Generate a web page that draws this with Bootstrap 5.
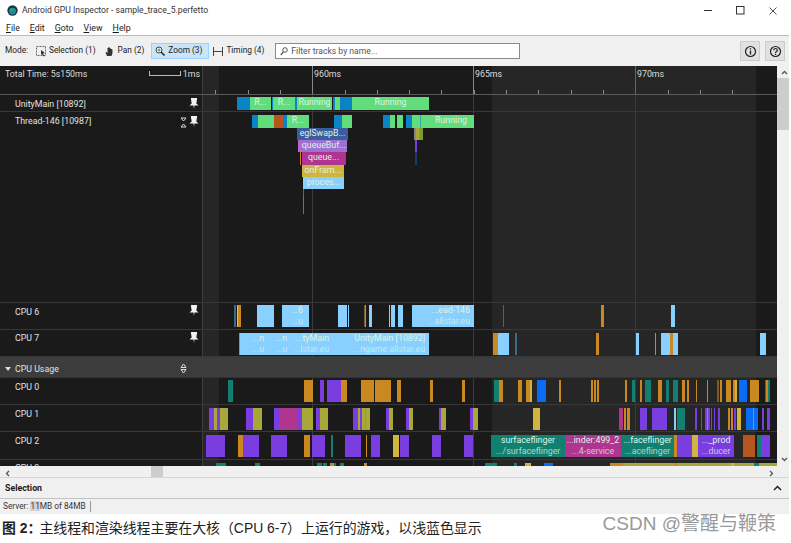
<!DOCTYPE html>
<html lang="zh"><head><meta charset="utf-8"><title>Android GPU Inspector</title>
<link href="https://cdn.jsdelivr.net/npm/bootstrap@5.3.0/dist/css/bootstrap.min.css" rel="stylesheet">
<style>
html,body{margin:0;height:543px;overflow:hidden;background:#fff}
body{font:8.8px/1.2 Roboto,sans-serif;color:#1a1a1a}
.win{width:789px;height:514px;display:flex;flex-direction:column;background:#f0f0f0}
.ttl{height:21px;background:#fff;padding:0 0 0 7px;flex:none}
.ttl .nm{margin-left:4px;color:#333;font-size:8.6px}
.wc{margin-left:auto;padding-right:12px;gap:24px}
.mnu{height:15px;background:#fff;padding:0 0 0 6px;gap:10px;border-bottom:1px solid #bbb;flex:none}
.mnu u{text-decoration-thickness:1px;text-underline-offset:1px}
.tbar{height:30px;padding:0 4px 0 5px;flex:none;font-size:8.3px}
.md{height:16px;display:flex;align-items:center;white-space:nowrap;border:1px solid transparent}
.md.on{background:#cce4f7;border-color:#99d1ff;padding:0 6px 0 3px}
.mode{margin-right:7px;width:23px}
.pan{margin-left:7px}.zm{margin-left:6px}.tim{margin-left:3px}
.gap2px{margin-left:2px}.gap3px{margin-left:3px}
.flt{width:245px;height:16px;margin-left:10px;border:1px solid #8a8a8a;background:#fff;padding-left:4px;color:#555;gap:3px;font-size:8.6px}
.ib{width:20px;height:20px;background:#e1e1e1;border:1px solid #ccc;margin-left:5px}
.tmain{flex:1;min-height:0;display:flex}
.tl{position:relative;flex:1;min-width:0;background:#1a1a1a;color:#e2e2e2;overflow:hidden}
.bnd{position:absolute;top:0;bottom:0;background:#262626}
.vl{position:absolute;top:0;bottom:0;width:1px;background:#3b3b3b}
.trk{position:relative;display:flex;border-bottom:1px solid #383838;flex:none}
.lab{width:203px;flex:none;background:#1a1a1a;border-right:1px solid #3f3f3f;padding-left:15px;display:flex;align-items:flex-start;white-space:nowrap;position:relative;z-index:2}
.lab .pin{position:absolute;left:189px}
.cv{position:relative;flex:1;overflow:hidden}
.hd{height:29px;border-bottom-color:#5a5a5a}
.hd .lab{padding:3px 2px 0 5px;justify-content:space-between;color:#ddd}
.sb{position:absolute;top:5px;left:149px;width:32px;height:5px;border:1px solid #bbb;border-top:0}
.tm{position:absolute;top:3px;color:#ddd}
.tk{position:absolute;top:24px;width:1px;height:5px;background:#8a8a8a}
.sg{position:absolute;overflow:hidden;white-space:nowrap;text-align:center;line-height:11.5px;color:#dff3e5}
.sg.r{text-align:right;padding-right:4px}
.sg.two{line-height:11px}
.sg span{display:block}
.sg span+span{opacity:.75}
.use{height:21px;background:#3c3c3c;border-bottom-color:#333;z-index:3}
.use .lab{background:#3c3c3c;border-right:0;padding:7px 0 0 15px}
.vs{width:12px;flex:none;position:relative;background:#f0f0f0}
.th{position:absolute;top:12px;left:0;width:100%;height:52px;background:#cdcdcd}
.hs{height:12px;flex:none;position:relative;background:#f0f0f0;border-bottom:1px solid #d6d6d6}
.hth{position:absolute;left:151px;top:0;width:12px;height:11px;background:#cdcdcd}
.sel{height:21px;flex:none;padding:0 7px 0 5px;border-bottom:1px solid #c4c4c4;font-weight:700}
.stat{height:15px;flex:none;padding-left:3px;color:#333;font-size:8.3px}
.stat b{font-weight:400;background:#d3d3dc}
.stat i{display:inline-block;width:1px;height:11px;background:#999;margin-left:4px}
.cap{height:29px;padding:0 15px 0 2px;font:13.9px/1 "Liberation Sans","Noto Sans CJK SC",sans-serif;color:#222}
.cap strong{margin-right:-2px}
.wm{font-size:19px;color:#999;align-self:flex-start}
</style></head>
<body>
<div class="win">
 <div class="ttl d-flex align-items-center">
  <svg width="11" height="11" viewBox="0 0 12 12"><circle cx="6" cy="6" r="5.600" fill="#16324a"/><circle cx="6" cy="6.600" r="3.700" fill="#1e9e8a"/><path d="M3 7a3.400 3.400 0 0 0 6 0z" fill="#2a6fb0"/></svg>
  <span class="nm">Android GPU Inspector - sample_trace_5.perfetto</span>
  <div class="wc d-flex align-items-center">
   <svg width="8" height="9" viewBox="0 0 8 9"><path d="M0 4.500h8" stroke="#333"/></svg>
   <svg width="9" height="9" viewBox="0 0 9 9"><rect x=".5" y=".5" width="7.500" height="7.500" fill="none" stroke="#333"/></svg>
   <svg width="8" height="8" viewBox="0 0 8 8"><path d="M.5.5l7 7M7.500.5l-7 7" stroke="#555"/></svg>
  </div>
 </div>
 <div class="mnu d-flex align-items-center"><span><u>F</u>ile</span><span><u>E</u>dit</span><span><u>G</u>oto</span><span><u>V</u>iew</span><span><u>H</u>elp</span></div>
 <div class="tbar d-flex align-items-center">
  <span class="mode">Mode:</span>
  <div class="md"><svg width="11" height="11" viewBox="0 0 11 11"><rect x=".5" y=".5" width="9" height="9" fill="none" stroke="#666" stroke-dasharray="2 1"/><path d="M5 4l4 3-2 .5L8.500 10 7.500 10.500 6 8 5 9z" fill="#333"/></svg><span class="gap2px">Selection (1)</span></div>
  <div class="md pan"><svg width="10" height="11" viewBox="0 0 10 11"><path d="M2 10 .5 6.500l1-.5 1 1V2l1 0V1h1v1l1 0v1h1.500l.5 1v3l-1 3z" fill="#333"/></svg><span class="gap3px">Pan (2)</span></div>
  <div class="md on zm"><svg width="10" height="10" viewBox="0 0 10 10"><circle cx="4" cy="4" r="3" fill="#dfe" stroke="#444"/><path d="M6 6l3.500 3.500" stroke="#333" stroke-width="1.600"/><path d="M2.500 4h3M4 2.500v3" stroke="#444" stroke-width=".7"/></svg><span class="gap3px">Zoom (3)</span></div>
  <div class="md tim"><svg width="10" height="9" viewBox="0 0 10 9"><path d="M.5 0v9M9.500 0v9M.5 4.500h9" stroke="#444"/></svg><span class="gap3px">Timing (4)</span></div>
  <div class="flt d-flex align-items-center"><svg width="8" height="9" viewBox="0 0 8 9"><circle cx="5" cy="3" r="2.300" fill="none" stroke="#555"/><path d="M3.300 5 .8 8" stroke="#555" stroke-width="1.200"/></svg><span>Filter tracks by name...</span></div>
  <div class="ib d-flex align-items-center justify-content-center ms-auto"><svg width="13" height="13" viewBox="0 0 13 13"><circle cx="6.500" cy="6.500" r="5" fill="none" stroke="#222" stroke-width="1.200"/><path d="M6.500 5.500v4M6.500 3.300v1.200" stroke="#222" stroke-width="1.300"/></svg></div>
  <div class="ib d-flex align-items-center justify-content-center"><svg width="13" height="13" viewBox="0 0 13 13"><circle cx="6.500" cy="6.500" r="5" fill="none" stroke="#222" stroke-width="1.200"/><path d="M4.800 5.200c0-2.300 3.500-2.300 3.500 0 0 1.300-1.800 1.300-1.800 2.700M6.500 8.800v1.200" fill="none" stroke="#222" stroke-width="1.200"/></svg></div>
 </div>
 <div class="tmain">
  <div class="tl" id="tl"></div>
  <div class="vs">
   <div class="th"></div>
   <svg class="position-absolute top-0 start-0 mt-1 ms-1" width="7" height="5" viewBox="0 0 7 5"><path d="M1 4l2.500-2.500L6 4" fill="none" stroke="#555" stroke-width="1.300"/></svg>
   <svg class="position-absolute bottom-0 start-0 mb-1 ms-1" width="7" height="5" viewBox="0 0 7 5"><path d="M1 1l2.500 2.500L6 1" fill="none" stroke="#555" stroke-width="1.300"/></svg>
  </div>
 </div>
 <div class="hs"><div class="hth"></div>
  <svg class="position-absolute top-0 mt-1" style="left:5px" width="5" height="7" viewBox="0 0 5 7"><path d="M4 1 1.500 3.500 4 6" fill="none" stroke="#555" stroke-width="1.300"/></svg>
  <svg class="position-absolute top-0 mt-1" style="left:769px" width="5" height="7" viewBox="0 0 5 7"><path d="M1 1l2.500 2.500L1 6" fill="none" stroke="#555" stroke-width="1.300"/></svg>
 </div>
 <div class="sel d-flex align-items-center justify-content-between"><span>Selection</span><svg width="9" height="6" viewBox="0 0 9 6"><path d="M1 5l3.500-3.500L8 5" fill="none" stroke="#222" stroke-width="1.500"/></svg></div>
 <div class="stat d-flex align-items-center"><span>Server: <b>11</b>MB of 84MB</span><i></i></div>
</div>
<div class="cap d-flex align-items-center justify-content-between">
 <span class="text-nowrap"><strong>图 2：</strong>主线程和渲染线程主要在大核（CPU 6-7）上运行的游戏，以浅蓝色显示</span>
 <span class="wm text-nowrap">CSDN @警醒与鞭策</span>
</div>
<script>
const B='#0a84c4',G='#61dd7c',O='#cc8820',P='#7a3ee0',T='#128070',L='#87d0ff',V='#a8a838',K='#b03590',Y='#cfb540',U='#0a6cf5',R='#b7551c',D='#3a6a8a',DO='#7a5a25';
const X0=203;
const pin=t=>`<svg class="pin" style="top:${t}px" width="10" height="11" viewBox="0 0 10 11"><path d="M2 0h6v1.500L7.300 5.500 9.500 7.500H5.500L5 11 4.500 7.500H.5L2.700 5.500 2 1.500z" fill="#f2f2f2"/></svg>`;
const expand='<svg class="position-absolute" style="left:180px;top:5px" width="7" height="11" viewBox="0 0 7 11"><path d="M1 1h5L3.500 4zM1 10h5L3.500 7z" fill="none" stroke="#ddd"/></svg>';
function segs(top,h,list){return list.map(s=>{const[a,b,c,t1,t2,al]=s;
 const tx=t1?(t2?`<span>${t1}</span><span>${t2}</span>`:t1):'';
 return `<div class="sg${al?' r':''}${t2?' two':''}" style="left:${a-X0}px;width:${b-a}px;top:${s[6]??top}px;height:${s[7]??h}px;background:${c}">${tx}</div>`}).join('')}
function trk(label,h,html,extra='',lt=0){return `<div class="trk" style="height:${h}px"><div class="lab" style="padding-top:${lt}px">${label}${extra}</div><div class="cv">${html}</div></div>`}
let o='';
[[203,219],[492,756]].forEach(b=>o+=`<div class="bnd" style="left:${b[0]}px;width:${b[1]-b[0]}px"></div>`);
[312,473,635].forEach(x=>o+=`<div class="vl" style="left:${x}px"></div>`);
let tk='';for(let i=0;i<17;i++){const x=215.3+32.3*i;if(x<765.6)tk+=`<div class="tk" style="left:${Math.round(x)-X0}px"></div>`}
tk+=`<div class="tk" style="left:${312-X0}px;top:0;height:29px;background:#888"></div><div class="tk" style="left:${473-X0}px;top:0;height:29px;background:#888"></div><div class="tk" style="left:${635-X0}px;top:0;height:29px;background:#666"></div>`;
o+=`<div class="trk hd"><div class="lab"><span>Total Time: 5s150ms</span><div class="sb"></div><span>1ms</span></div><div class="cv">
<span class="tm" style="left:${314-X0}px">960ms</span><span class="tm" style="left:${475-X0}px">965ms</span><span class="tm" style="left:${637-X0}px">970ms</span>${tk}</div></div>`;
o+=trk('UnityMain [10892]',17,segs(2,13,[[237,250,B],[250,271,G,'R...'],[272,273,B],[273,295,G,'R...'],[295,297,B],[297,332,G,'Running'],[333,335,B],[335,340,G],[340,352,B],[352,429,G,'Running']]),pin(3),4);
let th=segs(3,13,[[252,258,B],[258,274,G],[274,283,R],[283,287,B],[287,309,G,'R...'],[334,342,B],[342,352,G],[383,390,B],[390,395,G],[397,403,G],[406,412,B],[412,420,G],[420,421,'#3aa'],[421,428,G],[428,474,G,'Running']]);
th+=segs(16,12,[[297,348,'#3a5d9e','eglSwapB...'],[298,301,'#c060d0',0,0,0,28,12],[301,347,'#9b72cf','queueBuf...',0,0,28,12],[300,301,O,0,0,0,40,13],[345,346,U,0,0,0,40,13],[302,345,K,'queue...',0,0,40,13],[302,344,Y,'onFram...',0,0,53,12],[303,344,L,'proces...',0,0,65,12],[303,304,P,0,0,0,77,8],[303,304,'#4f8a4f',0,0,0,85,17],
[414,416,'#888',0,0,0,16,12],[416,419,V,0,0,0,16,12],[419,420,O,0,0,0,16,12],[420,423,'#7d9a30',0,0,0,16,12],[415,417,P,0,0,0,28,12],[415,417,'#1d3a66',0,0,0,40,13]]);
o+=trk('Thread-146 [10987]',191,th,expand+pin(4),4);
o+=trk('CPU 6',27,segs(2,22,[[234,236,D],[237,238,L],[238,241,O],[257,274,L],[282,307,L,'...6','...u',1],[307,309,L],[338,347,L],[348,349,L],[364,365,DO],[365,366,O],[369,372,L],[389,390,L],[391,395,L],[398,403,L],[412,474,L,'...ead-146','...allstar.eu',1],[503,504,DO],[601,604,O],[671,675,L]]),pin(2),4);
o+=trk('CPU 7',27,segs(3,22,[[239,240,O],[240,268,L,'...n','...u',1],[268,291,L,'...n','...u',1],[291,333,L,'...tyMain','...lstar.eu',1],[333,429,L,'UnityMain [10892]','...ngame.allstar.eu',1],[493,498,O],[498,509,L],[515,517,D],[596,599,O],[636,639,L],[655,656,O],[661,670,L],[670,673,O],[673,678,L],[760,766,L]]),pin(2),3);
o+=`<div class="trk use"><div class="lab"><svg class="position-absolute" style="left:5px;top:10px" width="6" height="4" viewBox="0 0 6 4"><path d="M0 0h6L3 4z" fill="#ddd"/></svg><span>CPU Usage</span><svg class="position-absolute" style="left:180px;top:6px" width="7" height="11" viewBox="0 0 7 11"><path d="M1 4.500 3.500 1 6 4.500zM1 6.500 3.500 10 6 6.500z" fill="none" stroke="#ddd"/></svg></div><div class="cv"></div></div>`;
o+=trk('CPU 0',27,segs(2,22,[[228,233,T],[304,313,O],[320,324,P],[327,341,P],[341,347,O],[361,374,O],[375,391,O],[397,401,O],[430,433,O],[462,465,O],[494,499,T],[499,503,O],[518,522,O],[526,530,O],[530,532,Y],[537,546,U],[559,561,O],[591,593,O],[594,596,O],[597,599,O],[625,627,O],[632,635,T],[640,642,O],[645,651,T],[658,662,O],[666,669,T],[673,678,T],[682,685,O],[687,689,O],[696,697,O],[707,708,O],[717,719,DO],[720,722,O],[726,731,O],[733,735,O],[735,737,Y],[739,747,U],[750,759,O],[765,766,T],[766,768,O],[768,770,T]]),'',4);
o+=trk('CPU 1',27,segs(3,22,[[209,214,P],[214,217,V],[217,220,P],[220,228,V],[246,253,P],[253,262,V],[274,279,P],[279,297,K],[297,302,P],[302,313,V],[316,320,P],[320,328,V],[353,358,P],[358,360,V],[360,362,P],[362,365,V],[365,366,O],[366,370,V],[386,389,P],[389,393,V],[406,409,P],[409,413,V],[439,441,P],[441,446,V],[470,473,P],[473,478,V],[533,540,Y],[619,623,K],[624,626,O],[627,630,O],[640,647,P],[652,667,P],[674,676,L],[677,685,T],[695,697,P],[701,702,P],[705,707,P],[707,708,O],[708,710,P],[711,712,P],[714,715,P],[718,720,P],[728,730,O],[731,733,O],[734,736,P],[737,741,Y],[746,753,U],[753,754,O],[754,758,U],[762,764,P],[767,770,P]]),'',4);
o+=trk('CPU 2',28,segs(3,22,[[206,225,P],[238,243,O],[243,259,P],[271,287,P],[304,310,O],[312,325,P],[331,333,T],[345,361,P],[366,367,O],[371,380,P],[393,399,Y],[400,409,P],[432,441,P],[464,473,P],[491,565,T,'surfaceflinger','.../surfaceflinger'],[565,621,K,'...inder:499_2','...4-service'],[621,674,T,'...faceflinger','...aceflinger'],[674,677,O],[677,692,P],[692,698,Y],[698,734,P,'..._prod','...ducer'],[743,755,R],[757,761,T],[761,770,P]]),'',4);
o+=trk('CPU 3',20,segs(3,17,[[216,226,T],[255,260,T],[317,322,T],[323,327,T],[330,334,O],[334,336,T],[340,344,T],[364,367,O],[485,497,T],[514,517,T],[525,531,Y],[544,553,U],[610,623,O],[623,674,V],[674,677,O],[677,731,V],[731,734,Y],[734,754,V],[754,759,T],[759,777,V]]),'',3);
document.getElementById('tl').innerHTML=o;
</script>
<script src="https://cdn.jsdelivr.net/npm/bootstrap@5.3.0/dist/js/bootstrap.bundle.min.js"></script>
</body></html>
